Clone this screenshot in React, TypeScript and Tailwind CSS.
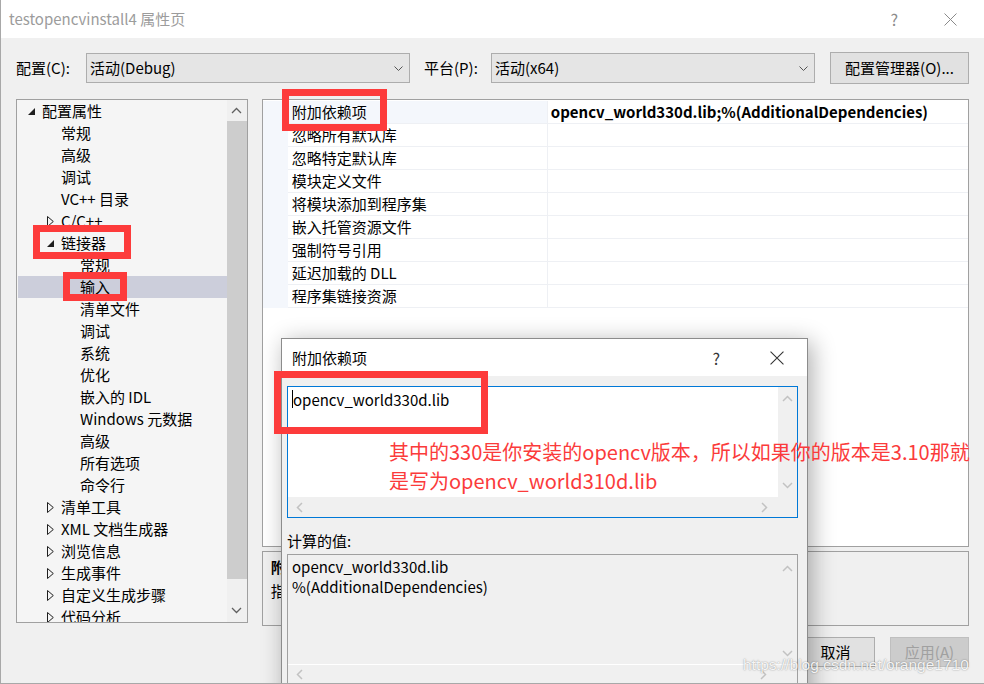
import React from "react";

// Property page for the linker input settings, with the "additional dependencies" editor open on top

type TreeNode = {
  label: string;
  level: 0 | 1 | 2;
  toggle?: "open" | "closed";
  selected?: boolean;
};

const treeNodes: TreeNode[] = [
  { label: "配置属性", level: 0, toggle: "open" },
  { label: "常规", level: 1 },
  { label: "高级", level: 1 },
  { label: "调试", level: 1 },
  { label: "VC++ 目录", level: 1 },
  { label: "C/C++", level: 1, toggle: "closed" },
  { label: "链接器", level: 1, toggle: "open" },
  { label: "常规", level: 2 },
  { label: "输入", level: 2, selected: true },
  { label: "清单文件", level: 2 },
  { label: "调试", level: 2 },
  { label: "系统", level: 2 },
  { label: "优化", level: 2 },
  { label: "嵌入的 IDL", level: 2 },
  { label: "Windows 元数据", level: 2 },
  { label: "高级", level: 2 },
  { label: "所有选项", level: 2 },
  { label: "命令行", level: 2 },
  { label: "清单工具", level: 1, toggle: "closed" },
  { label: "XML 文档生成器", level: 1, toggle: "closed" },
  { label: "浏览信息", level: 1, toggle: "closed" },
  { label: "生成事件", level: 1, toggle: "closed" },
  { label: "自定义生成步骤", level: 1, toggle: "closed" },
  { label: "代码分析", level: 1, toggle: "closed" },
];

const indent = ["pl-[7px]", "pl-[26px]", "pl-[45px]"];

const propRows = [
  "附加依赖项",
  "忽略所有默认库",
  "忽略特定默认库",
  "模块定义文件",
  "将模块添加到程序集",
  "嵌入托管资源文件",
  "强制符号引用",
  "延迟加载的 DLL",
  "程序集链接资源",
];

// small chevron used by combo boxes and scroll bars
const Chevron = ({ dir, color = "#606060", w = 1.3 }: { dir: "up" | "down" | "left" | "right"; color?: string; w?: number }) => {
  const vertical = dir === "up" || dir === "down";
  const points = {
    up: "1,6 5.5,1.5 10,6",
    down: "1,1 5.5,5.5 10,1",
    left: "6,1 1.5,5.5 6,10",
    right: "1,1 5.5,5.5 1,10",
  }[dir];
  return (
    <svg width={vertical ? 11 : 7} height={vertical ? 7 : 11} viewBox={vertical ? "0 0 11 7" : "0 0 7 11"}>
      <polyline points={points} fill="none" stroke={color} strokeWidth={w} />
    </svg>
  );
};

const CloseIcon = ({ size = 13, color = "#333" }: { size?: number; color?: string }) => (
  <svg width={size} height={size} viewBox="0 0 13 13">
    <path d="M0.5 0.5 L12.5 12.5 M12.5 0.5 L0.5 12.5" stroke={color} strokeWidth="1" fill="none" />
  </svg>
);

const ComboBox = ({ text }: { text: string }) => (
  <div className="w-[324px] h-[30px] flex items-center justify-between bg-[#e5e5e5] border border-[#adadad] pl-[3px] pr-[6px]">
    <span className="text-[15px] text-black">{text}</span>
    <svg width="9" height="5" viewBox="0 0 9 5">
      <polyline points="0.5,0.5 4.5,4.5 8.5,0.5" fill="none" stroke="#555" strokeWidth="1" />
    </svg>
  </div>
);

const TreeToggle = ({ kind }: { kind?: "open" | "closed" }) => {
  if (kind === "open")
    return (
      <svg width="7" height="7" viewBox="0 0 7 7" className="ml-[3px]">
        <polygon points="7,0 7,7 0,7" fill="#1e1e1e" />
      </svg>
    );
  if (kind === "closed")
    return (
      <svg width="7" height="11" viewBox="0 0 7 11" className="ml-[3px]">
        <polygon points="0.5,0.5 6.3,5.5 0.5,10.5" fill="none" stroke="#1e1e1e" strokeWidth="1" />
      </svg>
    );
  return null;
};

const RedBox = ({ className }: { className: string }) => (
  <div className={`absolute border-[7px] border-[#fd3b3b] ${className}`} />
);

export default function App() {
  return (
    <div className="relative w-[984px] h-[684px] overflow-hidden bg-[#f0f0f0] border-l border-b border-[#a8a8a8] font-['Noto_Sans_CJK_SC',sans-serif] text-[15px] leading-[20px] text-black">
      {/* window caption */}
      <div className="h-[38px] bg-white flex items-center pl-[8px] pr-[27px]">
        <span className="flex-1 text-[15px] text-[#9c9c9c]">testopencvinstall4 属性页</span>
        <span className="text-[16px] text-[#8a8a8a] mr-[46px]">?</span>
        <CloseIcon size={13} color="#8a8a8a" />
      </div>

      <div className="px-[15px]">
        {/* configuration / platform row */}
        <div className="mt-[14px] h-[32px] flex items-center">
          <span className="w-[70px]">配置(C):</span>
          <ComboBox text="活动(Debug)" />
          <span className="ml-[14px] w-[67px]">平台(P):</span>
          <ComboBox text="活动(x64)" />
          <button className="ml-[15px] w-[139px] h-[32px] bg-[#e1e1e1] border border-[#adadad] text-[15px]">
            配置管理器(O)...
          </button>
        </div>

        <div className="mt-[15px] flex gap-[14px]">
          {/* category tree */}
          <div className="w-[232px] h-[524px] border border-[#a0a0a0] bg-[#f5f5f5] flex overflow-hidden">
            <div className="flex-1 overflow-hidden">
              {treeNodes.map((node, i) => (
                <div
                  key={i}
                  className={`h-[22px] flex items-center ml-[1px] ${indent[node.level]} ${node.selected ? "bg-[#cccedb]" : ""}`}
                >
                  <div className="w-[17px] flex items-center">
                    <TreeToggle kind={node.toggle} />
                  </div>
                  <span className="whitespace-nowrap">{node.label}</span>
                </div>
              ))}
            </div>
            <div className="w-[20px] flex flex-col bg-[#f0f0f0]">
              <div className="h-[21px] flex items-center justify-center">
                <Chevron dir="up" />
              </div>
              <div className="h-[458px] bg-[#cdcdcd]" />
              <div className="flex-1" />
              <div className="h-[24px] flex items-center justify-center">
                <Chevron dir="down" />
              </div>
            </div>
          </div>

          {/* property grid */}
          <div className="w-[708px] flex flex-col">
            <div className="h-[448px] border border-[#a0a0a0] bg-white pt-[1px]">
              {propRows.map((name, i) => (
                <div key={name} className="h-[23px] flex">
                  <div className="w-[25px] bg-[#f4f7fc]" />
                  <div
                    className={`w-[260px] pl-[4px] flex items-center border-b border-r border-[#eef0f4] whitespace-nowrap ${i === 0 ? "bg-[#f4f7fc]" : ""}`}
                  >
                    {name}
                  </div>
                  <div className="flex-1 pl-[3px] flex items-center border-b border-[#eef0f4] whitespace-nowrap">
                    {i === 0 && <span className="font-bold">opencv_world330d.lib;%(AdditionalDependencies)</span>}
                  </div>
                </div>
              ))}
            </div>

            <div className="mt-[4px] h-[75px] border border-[#a0a0a0] bg-[#f0f0f0] pl-[8px] pt-[3px]">
              <div className="font-bold leading-[24px]">附加依赖项</div>
              <div className="leading-[24px]">指定要添加到链接命令行的附加项。</div>
            </div>

            <div className="mt-[11px] h-[30px] flex justify-end gap-[15px]">
              <button className="w-[79px] h-[30px] bg-[#e1e1e1] border border-[#adadad]">确定</button>
              <button className="w-[79px] h-[30px] bg-[#e1e1e1] border border-[#adadad]">取消</button>
              <button className="w-[79px] h-[30px] bg-[#cccccc] border border-[#bfbfbf] text-[#a0a0a0]">应用(A)</button>
            </div>
          </div>
        </div>
      </div>

      {/* additional dependencies editor */}
      <div className="absolute left-[280px] top-[338px] w-[527px] h-[400px] border border-[#8c8c8c] bg-[#f0f0f0] shadow-[4px_4px_22px_rgba(0,0,0,0.32)]">
        <div className="h-[37px] bg-white flex items-center pl-[10px]">
          <span className="flex-1">附加依赖项</span>
          <span className="text-[16px] text-[#333] mr-[50px]">?</span>
          <div className="mr-[23px]">
            <CloseIcon size={14} color="#333" />
          </div>
        </div>

        <div className="pl-[5px] pt-[10px]">
          <div className="w-[511px] h-[132px] border border-[#0078d7] flex flex-col">
            <div className="flex-1 flex">
              <div className="flex-1 bg-white pl-[4px] pt-[3px] flex items-start">
                <span className="w-px h-[18px] bg-black" />
                <span>opencv_world330d.lib</span>
              </div>
              <div className="w-[19px] bg-[#f0f0f0] flex flex-col items-center justify-between pt-[8px] pb-[8px]">
                <Chevron dir="up" color="#c2c2c2" w={1.5} />
                <Chevron dir="down" color="#c2c2c2" w={1.5} />
              </div>
            </div>
            <div className="h-[20px] flex bg-[#f0f0f0]">
              <div className="flex-1 flex items-center justify-between pl-[8px] pr-[10px]">
                <Chevron dir="left" color="#c2c2c2" w={1.5} />
                <Chevron dir="right" color="#c2c2c2" w={1.5} />
              </div>
              <div className="w-[19px]" />
            </div>
          </div>

          <div className="mt-[13px] h-[20px]">计算的值:</div>

          <div className="mt-[3px] w-[511px] h-[132px] border border-[#a0a0a0] bg-[#f0f0f0] flex flex-col">
            <div className="h-[109px] flex">
              <div className="flex-1 pl-[4px] pt-[2px]">
                <div>opencv_world330d.lib</div>
                <div>%(AdditionalDependencies)</div>
              </div>
              <div className="w-[19px] flex flex-col items-center justify-between pt-[10px] pb-[7px]">
                <Chevron dir="up" color="#c2c2c2" w={1.5} />
                <Chevron dir="down" color="#c2c2c2" w={1.5} />
              </div>
            </div>
            <div className="h-[20px] border-t border-white flex items-center justify-between pl-[8px] pr-[30px]">
              <Chevron dir="left" color="#c2c2c2" w={1.5} />
              <Chevron dir="right" color="#c2c2c2" w={1.5} />
            </div>
          </div>
        </div>
      </div>

      {/* red notes */}
      <div className="absolute left-[388px] top-[437px] text-[20px] leading-[29px] text-[#fb3b3b] whitespace-nowrap">
        <div>其中的330是你安装的opencv版本，所以如果你的版本是3.10那就</div>
        <div>是写为opencv_world310d.lib</div>
      </div>

      <RedBox className="left-[281px] top-[89px] w-[105px] h-[42px]" />
      <RedBox className="left-[32px] top-[225px] w-[98px] h-[34px]" />
      <RedBox className="left-[62px] top-[272px] w-[64px] h-[29px]" />
      <RedBox className="left-[273px] top-[371px] w-[214px] h-[63px]" />

      <div className="absolute left-[742px] top-[655px] font-['Liberation_Sans',sans-serif] text-[15.5px] text-white/90 [text-shadow:0_0_1.5px_rgba(0,0,0,0.5)] whitespace-nowrap">
        https://blog.csdn.net/orange1710
      </div>
    </div>
  );
}
